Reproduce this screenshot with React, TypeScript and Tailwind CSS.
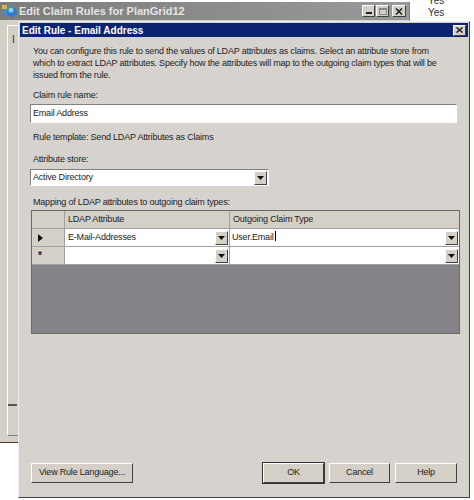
const raised = 'border border-t-white border-l-white border-r-[#404040] border-b-[#404040]';

function DropButton() {
  return (
    <div className={`flex h-[14px] w-[13px] shrink-0 items-center justify-center bg-[#d4d0c8] ${raised}`}>
      <svg width="7" height="4" viewBox="0 0 7 4">
        <path d="M0 0h7L3.5 4z" fill="#111" />
      </svg>
    </div>
  );
}

function WinButton({ label, primary }: { label: string; primary?: boolean }) {
  return (
    <div
      className={`flex h-[20px] items-center justify-center bg-[#d4d0c8] text-[#222] ${
        primary ? 'outline outline-1 outline-[#333]' : ''
      } ${raised}`}
    >
      {label}
    </div>
  );
}

function GridRow({ marker, attr, claim }: { marker: 'arrow' | 'star'; attr: string; claim: string }) {
  return (
    <div className="flex h-[18px] border-b border-[#a0a0a0]">
      <div className="flex w-[33px] shrink-0 items-center border-r border-[#a0a0a0] bg-[#d4d0c8] pl-[6px]">
        {marker === 'arrow' ? (
          <svg width="5" height="8" viewBox="0 0 5 8">
            <path d="M0 0l5 4-5 4z" fill="#111" />
          </svg>
        ) : (
          <span className="text-[10px] font-bold leading-none text-[#222]">*</span>
        )}
      </div>
      <div className="flex w-[165px] shrink-0 items-center justify-between border-r border-[#a0a0a0] bg-white pl-[3px] pr-[1px]">
        <span>{attr}</span>
        <DropButton />
      </div>
      <div className="flex flex-1 items-center justify-between bg-white pl-[2px] pr-[1px]">
        <span>
          {claim}
          {claim && <span className="ml-px inline-block h-[10px] w-px translate-y-[1px] bg-black" />}
        </span>
        <DropButton />
      </div>
    </div>
  );
}

export default function App() {
  return (
    <div className="relative h-[500px] w-[474px] overflow-hidden bg-white font-['Liberation_Sans',Arial,sans-serif] text-[#222]">
      {/* list behind, right edge */}
      <div className="absolute left-[428px] top-[-5px] text-[10px] leading-[12px] text-[#333]">Yes</div>
      <div className="absolute left-[428px] top-[7px] text-[10px] leading-[12px] text-[#333]">Yes</div>

      {/* background window */}
      <div className="absolute left-0 top-[2px] flex h-[441px] w-[410px] flex-col border-b border-r border-b-[#404040] border-r-[#808080] bg-[#d4d0c8]">
        <div className="flex h-[18px] items-center bg-gradient-to-r from-[#7c7c7c] to-[#9a9a9a] pl-[2px] pr-[3px]">
          <svg width="16" height="14" viewBox="0 0 16 14" className="shrink-0">
            <rect x="1" y="2" width="9" height="9" rx="2" fill="#3a8fd0" />
            <circle cx="10" cy="8" r="5" fill="#2f7fc4" />
            <circle cx="9" cy="6" r="2.5" fill="#8fd0f0" />
            <rect x="0" y="1" width="5" height="4" fill="#e0b040" />
          </svg>
          <span className="ml-[1px] text-[11px] font-bold text-[#e4e4e4]">Edit Claim Rules for PlanGrid12</span>
          <div className="ml-auto flex gap-[1px]">
            <div className={`flex h-[12px] w-[13px] items-end justify-center bg-[#d4d0c8] pb-[2px] ${raised}`}>
              <div className="h-[2px] w-[6px] bg-[#222]" />
            </div>
            <div className={`mr-[2px] flex h-[12px] w-[13px] items-center justify-center bg-[#d4d0c8] ${raised}`}>
              <div className="h-[7px] w-[8px] border border-t-2 border-[#888]" />
            </div>
            <div className={`flex h-[12px] w-[14px] items-center justify-center bg-[#d4d0c8] ${raised}`}>
              <svg width="8" height="7" viewBox="0 0 8 7">
                <path d="M1 0.5l6 6M7 0.5l-6 6" stroke="#222" strokeWidth="1.6" />
              </svg>
            </div>
          </div>
        </div>
        <div className="relative flex-1 px-[7px] pt-[5px] pb-[6px]">
          <div className="h-full border border-l-white border-t-white border-b-[#808080] border-r-[#808080] pl-[4px]">
            <span className="text-[10px] text-[#333]">I</span>
          </div>
          <div className="absolute left-[8px] top-[384px] h-[2px] w-[9px] bg-[#555]" />
        </div>
      </div>

      {/* dialog */}
      <div className="absolute left-[18px] top-[21px] flex h-[477px] w-[452px] flex-col border border-b-[#404040] border-l-[#eeeeee] border-r-[#404040] border-t-[#eeeeee] bg-[#d6d3ce] p-[1px] text-[9px] tracking-[-0.2px]">
        <div className="flex h-[14px] shrink-0 items-center bg-[#0b2470] pl-[2px] pr-[2px]">
          <span className="text-[10px] font-bold tracking-normal text-white">Edit Rule - Email Address</span>
          <div className={`ml-auto flex h-[11px] w-[13px] items-center justify-center bg-[#d4d0c8] ${raised}`}>
            <svg width="7" height="6" viewBox="0 0 7 6">
              <path d="M0.5 0.5l6 5M6.5 0.5l-6 5" stroke="#222" strokeWidth="1.5" />
            </svg>
          </div>
        </div>

        <div className="flex flex-1 flex-col pl-[10px] pr-[11px] pb-[13px]">
          <p className="ml-[3px] mt-[8px] whitespace-nowrap leading-[12px]">
            You can configure this rule to send the values of LDAP attributes as claims. Select an attribute store from
            <br />
            which to extract LDAP attributes. Specify how the attributes will map to the outgoing claim types that will be
            <br />
            issued from the rule.
          </p>

          <div className="ml-[3px] mt-[8px] h-[12px] leading-[12px]">Claim rule name:</div>
          <div className="mt-[3px] flex h-[19px] items-center border border-b-white border-l-[#808080] border-r-white border-t-[#808080] bg-white pl-[2px]">
            Email Address
          </div>

          <div className="ml-[3px] mt-[8px] h-[12px] leading-[12px]">Rule template: Send LDAP Attributes as Claims</div>

          <div className="ml-[3px] mt-[10px] h-[12px] leading-[12px]">Attribute store:</div>
          <div className="mt-[4px] flex h-[17px] w-[239px] items-center justify-between border border-b-white border-l-[#808080] border-r-white border-t-[#808080] bg-white pl-[2px] pr-[1px]">
            <span>Active Directory</span>
            <DropButton />
          </div>

          <div className="ml-[3px] mt-[10px] h-[12px] leading-[12px]">Mapping of LDAP attributes to outgoing claim types:</div>
          <div className="ml-px mt-[2px] flex h-[124px] w-[429px] flex-col border border-[#6a6a6a] bg-[#858387]">
            <div className="flex h-[18px] border-b border-[#a0a0a0] bg-[#d4d0c8]">
              <div className="w-[33px] shrink-0 border-r border-[#a0a0a0]" />
              <div className="flex w-[165px] shrink-0 items-center border-r border-[#a0a0a0] pl-[3px]">LDAP Attribute</div>
              <div className="flex flex-1 items-center pl-[3px]">Outgoing Claim Type</div>
            </div>
            <GridRow marker="arrow" attr="E-Mail-Addresses" claim="User.Email" />
            <GridRow marker="star" attr="" claim="" />
          </div>

          <div className="mt-auto flex items-center">
            <div className="ml-px w-[102px]">
              <WinButton label="View Rule Language..." />
            </div>
            <div className="ml-auto flex gap-[5px]">
              <div className="w-[61px]">
                <WinButton label="OK" primary />
              </div>
              <div className="w-[61px]">
                <WinButton label="Cancel" />
              </div>
              <div className="w-[62px]">
                <WinButton label="Help" />
              </div>
            </div>
          </div>
        </div>
      </div>
    </div>
  );
}
